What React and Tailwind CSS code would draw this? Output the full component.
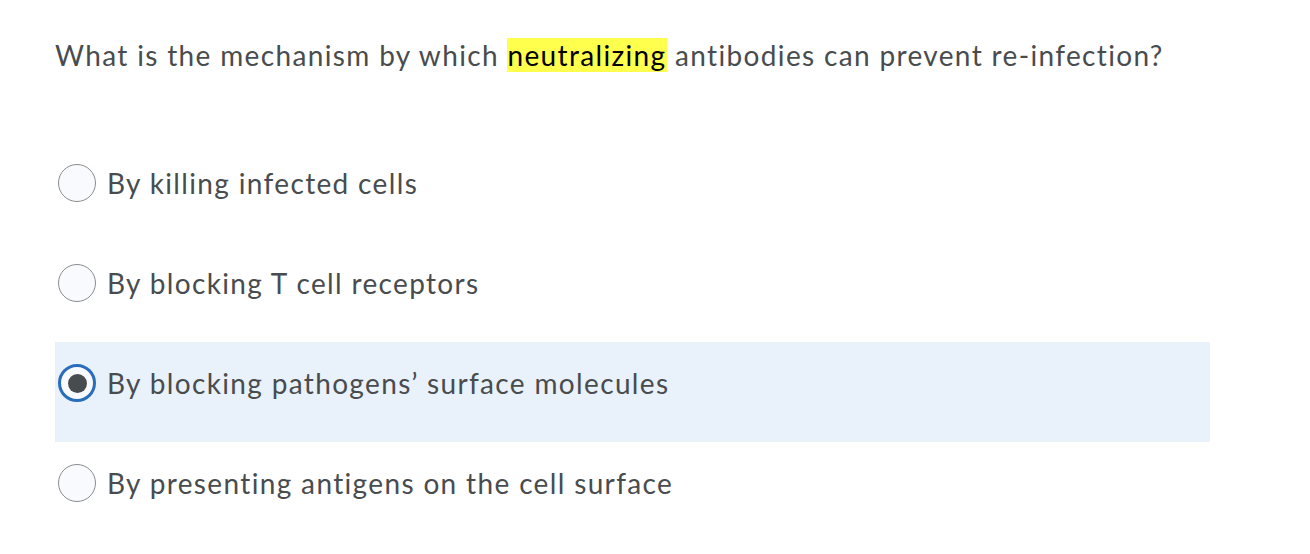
import React, { useState } from 'react';

const options = [
  'By killing infected cells',
  'By blocking T cell receptors',
  'By blocking pathogens\u2019 surface molecules',
  'By presenting antigens on the cell surface',
];

function Radio({ checked }) {
  return (
    <span
      className={
        checked
          ? 'flex h-[38px] w-[38px] shrink-0 items-center justify-center rounded-full border-[3px] border-[#2a6ebb] bg-[#f9fafe]'
          : 'flex h-[38px] w-[38px] shrink-0 items-center justify-center rounded-full border-[1.5px] border-[#8a8d90] bg-[#f9fafe]'
      }
    >
      {checked && <span className="h-[19px] w-[19px] rounded-full bg-[#494c4e]" />}
    </span>
  );
}

export default function App() {
  const [selected, setSelected] = useState(2);

  return (
    <div className="min-h-[554px] bg-white font-['Lato',sans-serif] text-[#494c4e] tracking-[1.35px] [font-variant-ligatures:none]">
      <div className="w-[1210px] pl-[55px] pt-[34px]">
        <p className="text-[28px] leading-[42px]">
          What is the mechanism by which{' '}
          <span className="bg-[#ffff4d] text-black">neutralizing</span> antibodies can prevent re-infection?
        </p>

        <div className="mt-[66px]">
          {options.map((opt, i) => (
            <label
              key={opt}
              onClick={() => setSelected(i)}
              className={
                'flex h-[100px] cursor-pointer items-center gap-[11px] pb-[18px] pl-[3px] ' +
                (selected === i ? 'bg-[#e9f1fb]' : '')
              }
            >
              <Radio checked={selected === i} />
              <span className="text-[28px] leading-[42px]">{opt}</span>
            </label>
          ))}
        </div>
      </div>
    </div>
  );
}
